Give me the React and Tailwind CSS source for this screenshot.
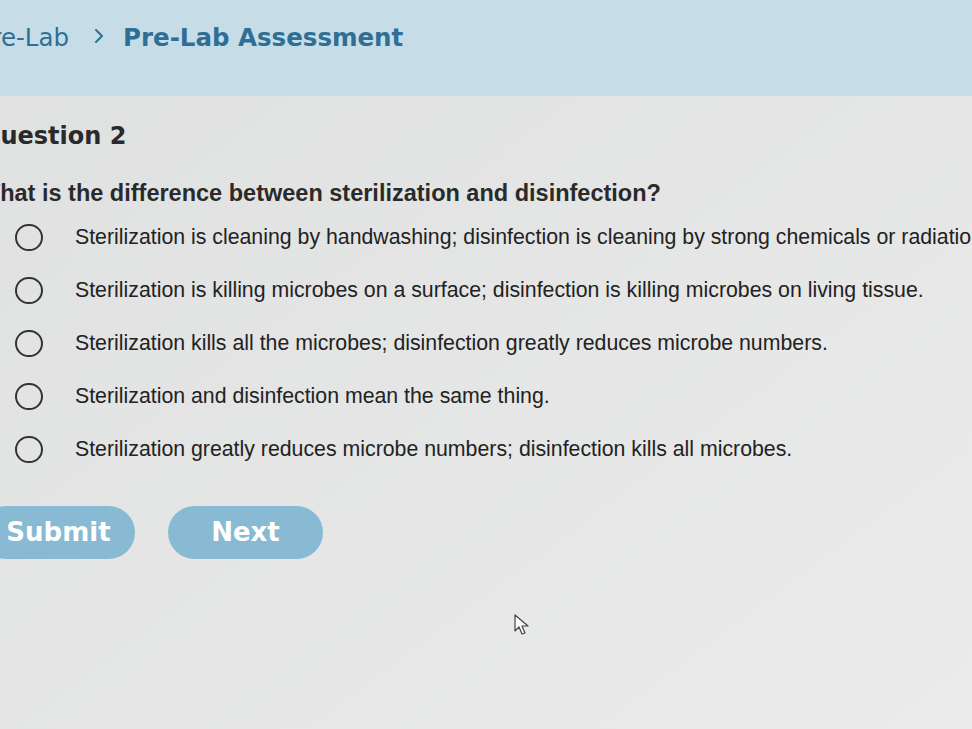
import React from "react"

const OPTIONS = [
  "Sterilization is cleaning by handwashing; disinfection is cleaning by strong chemicals or radiation.",
  "Sterilization is killing microbes on a surface; disinfection is killing microbes on living tissue.",
  "Sterilization kills all the microbes; disinfection greatly reduces microbe numbers.",
  "Sterilization and disinfection mean the same thing.",
  "Sterilization greatly reduces microbe numbers; disinfection kills all microbes.",
]

const HEAD_FONT = "font-['DejaVu_Sans',sans-serif]"
const BODY_FONT = "font-['Liberation_Sans',Arial,sans-serif]"

function Cursor() {
  return (
    <svg width="16" height="22" viewBox="0 0 16 22" className="absolute left-[514px] top-[614px]">
      <path d="M1 1 L1 17 L5 13 L8 20 L11 19 L8 12 L14 12 Z" fill="#fafafa" stroke="#444" strokeWidth="1.2" strokeLinejoin="round" />
    </svg>
  )
}

export default function App() {
  return (
    <div className="relative w-[972px] h-[729px] overflow-hidden bg-gradient-to-br from-[#dfe1e0] to-[#eaebea]">
      {/* header / breadcrumb */}
      <div className={`h-[96px] bg-[#c6dde7] flex items-start pt-[20px] whitespace-nowrap ${HEAD_FONT} text-[24.5px] text-[#2f6f96]`}>
        <span className="-ml-[23px]">Pre-Lab</span>
        <svg width="14" height="22" viewBox="0 0 14 22" className="ml-[23px] mr-[17px] mt-[5px]">
          <path d="M4 5 L10 11 L4 17" fill="none" stroke="#2f6f96" strokeWidth="2" strokeLinecap="round" strokeLinejoin="round" />
        </svg>
        <span className="font-bold">Pre-Lab Assessment</span>
      </div>

      {/* question */}
      <div className="pt-[22px]">
        <h2 className={`-ml-[20px] ${HEAD_FONT} font-bold text-[24px] text-[#2a2a2a] whitespace-nowrap`}>Question 2</h2>
        <p className={`mt-[22px] -ml-[22px] ${BODY_FONT} font-bold text-[23.5px] text-[#2a2a2a] whitespace-nowrap`}>
          What is the difference between sterilization and disinfection?
        </p>

        <div className="mt-[13px] flex flex-col gap-[26px]">
          {OPTIONS.map((o, i) => (
            <label key={i} className="flex items-center whitespace-nowrap">
              <span className="ml-[15px] w-[28px] h-[27px] shrink-0 rounded-full border-[2.5px] border-[#333]" />
              <span className={`ml-[32px] ${BODY_FONT} text-[21.3px] text-[#222] leading-[27px]`}>{o}</span>
            </label>
          ))}
        </div>

        <div className={`mt-[43px] flex gap-[33px] ${HEAD_FONT} font-bold text-[26px] text-white`}>
          <button className="-ml-[20px] w-[155px] h-[53px] rounded-full bg-[#88bad3] flex items-center justify-center">
            <span className="ml-[2px]">Submit</span>
          </button>
          <button className="w-[155px] h-[53px] rounded-full bg-[#88bad3] flex items-center justify-center">
            Next
          </button>
        </div>
      </div>

      <Cursor />
    </div>
  )
}
